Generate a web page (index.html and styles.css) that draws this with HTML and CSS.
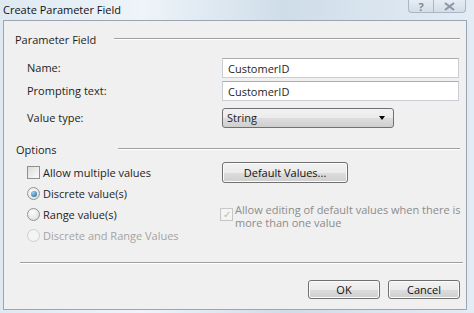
FILE: index.html
```html
<!doctype html>
<html lang="en">
<head>
<meta charset="utf-8" />
<title>Create Parameter Field</title>
<link rel="stylesheet" href="styles.css">
</head>
<body>
<div class="window">
  <div class="titlebar">
    <span class="title">Create Parameter Field</span>
    <div class="caption-btns">
      <span class="cbtn help">?</span>
      <span class="cbtn close">
        <svg width="11" height="9" viewBox="0 0 11 9"><path d="M1 1 L10 8 M10 1 L1 8" stroke="#8a98a8" stroke-width="2.2" fill="none"/></svg>
      </span>
    </div>
  </div>
  <div class="frame">
    <div class="client">
      <div class="group-head first"><span>Parameter Field</span><i class="rule"></i></div>

      <div class="row r1">
        <label class="lbl">Name:</label>
        <div class="textbox">CustomerID</div>
      </div>
      <div class="row">
        <label class="lbl">Prompting text:</label>
        <div class="textbox">CustomerID</div>
      </div>
      <div class="row r3">
        <label class="lbl">Value type:</label>
        <div class="combo"><span>String</span><span class="arrow"></span></div>
      </div>

      <div class="group-head opts"><span>Options</span><i class="rule"></i></div>

      <div class="options">
        <div class="left">
          <div class="opt"><span class="check"></span>Allow multiple values</div>
          <div class="opt"><span class="radio on"></span>Discrete value(s)</div>
          <div class="opt"><span class="radio"></span>Range value(s)</div>
          <div class="opt disabled"><span class="radio"></span>Discrete and Range Values</div>
        </div>
        <div class="right">
          <button class="btn default-values">Default Values...</button>
          <div class="allow-edit"><span class="check dis">&#10003;</span><span class="allow-text">Allow editing of default values when there is more than one value</span></div>
        </div>
      </div>

      <i class="rule bottom"></i>

      <div class="footer">
        <button class="btn">OK</button>
        <button class="btn">Cancel</button>
      </div>
    </div>
  </div>
</div>
</body>
</html>
```

FILE: styles.css
```css
*{box-sizing:border-box}
body{
  margin:0;
  width:474px; height:313px; overflow:hidden;
  font-family:"Open Sans","Noto Sans",sans-serif;
  font-size:11px;
  color:#1e1e1e;
  background:#c9d7e3;
}
.window{
  height:313px;
  background:linear-gradient(90deg,#dfe9f2 0%,#eef4f9 30%,#cfdde9 60%,#e3ecf4 100%);
}
.titlebar{
  height:20px;
  display:flex; align-items:flex-start; justify-content:space-between;
  padding-left:3px;
}
.title{line-height:17px; padding-top:1px; color:#111;}
.caption-btns{display:flex; margin-right:8px;}
.cbtn{
  height:13px; display:flex; align-items:center; justify-content:center;
  border:1px solid #a9b6c4; border-top:0;
  background:linear-gradient(#e6edf4,#d3dde8);
  color:#7d8b99; font-size:11px; font-weight:bold; line-height:1;
}
.help{width:25px; border-radius:0 0 0 4px; border-right:0;}
.close{width:33px; border-radius:0 0 4px 0;}
.frame{
  margin:0 7px 0 3px;
  height:290px;
  border:1px solid #9aa6b1;
  background:#f0f0f0;
}
.client{padding:0 6px 0 10px;}
.group-head{
  display:flex; align-items:center; gap:10px;
  height:18px;
}
.group-head span{white-space:nowrap;}
.group-head .rule{flex:1;}
.group-head.first{margin-top:9px;}
.group-head.first span{padding-left:1px;}
.group-head.first .rule{margin-left:8px;}
.group-head.opts{margin-top:11px; padding-left:2px;}
.group-head.opts .rule{margin-left:51px;}
.rule{display:block; height:2px; border-top:1px solid #a0a0a0; border-bottom:1px solid #fff;}
.row{display:flex; align-items:center; height:23px; padding-left:13px;}
.row.r1{margin-top:8px;}
.row.r3{margin-top:4px;}
.lbl{width:195px; flex:none;}
.textbox{
  width:237px; height:20px;
  border:1px solid #c9ced4; border-top-color:#abadb3;
  background:#fff; padding:2px 5px; line-height:15px;
}
.combo{
  width:172px; height:20px;
  display:flex; align-items:center; justify-content:space-between;
  border:1px solid #707070; border-radius:3px;
  background:linear-gradient(#f2f2f2 0%,#ebebeb 50%,#dddddd 51%,#cfcfcf 100%);
  padding:0 8px 0 4px;
}
.arrow{width:0; height:0; border-left:3.5px solid transparent; border-right:3.5px solid transparent; border-top:4px solid #000;}
.options{display:flex; padding-left:13px; margin-top:4px;}
.left{width:195px; flex:none; display:flex; flex-direction:column;}
.opt{display:flex; align-items:center; height:21px; gap:3px;}
.opt.disabled{color:#a4a4a4;}
.check{
  width:13px; height:13px; border:1px solid #8f8f8f;
  background:linear-gradient(135deg,#dcdcdc,#fbfbfb);
  display:inline-flex; align-items:center; justify-content:center;
  font-size:10px; color:#b8b8b8; flex:none;
}
.check.dis{border-color:#c6c6c6; background:#f4f4f4;}
.radio{
  width:13px; height:13px; border-radius:50%;
  border:1px solid #939393;
  background:radial-gradient(circle at 40% 35%,#fefefe,#d6d6d6);
  flex:none; position:relative;
}
.radio.on::after{
  content:""; position:absolute; left:2.5px; top:2.5px; width:6px; height:6px; border-radius:50%;
  background:radial-gradient(circle at 35% 30%,#9ad0f0,#1b5e95);
}
.opt.disabled .radio{border-color:#cfcfcf; background:#f4f4f4;}
.right{display:flex; flex-direction:column; align-items:flex-start;}
.btn{
  font:inherit; color:#111;
  border:1px solid #707070; border-radius:3px;
  background:linear-gradient(#f2f2f2 0%,#ebebeb 50%,#dddddd 51%,#cfcfcf 100%);
  box-shadow:inset 0 0 0 1px #fbfbfb;
  padding:0;
}
.default-values{width:126px; height:21px;}
.allow-edit{display:flex; gap:2px; margin-top:20px; color:#8c8c8c; line-height:13px; margin-left:-2px;}
.allow-edit .check{margin-top:5px;}
.allow-text{width:226px;}
.rule.bottom{margin:16px 0 0 6px; width:443px;}
.footer{display:flex; justify-content:flex-end; gap:8px; margin-top:16px;}
.footer .btn{width:72px; height:19px;}
```
